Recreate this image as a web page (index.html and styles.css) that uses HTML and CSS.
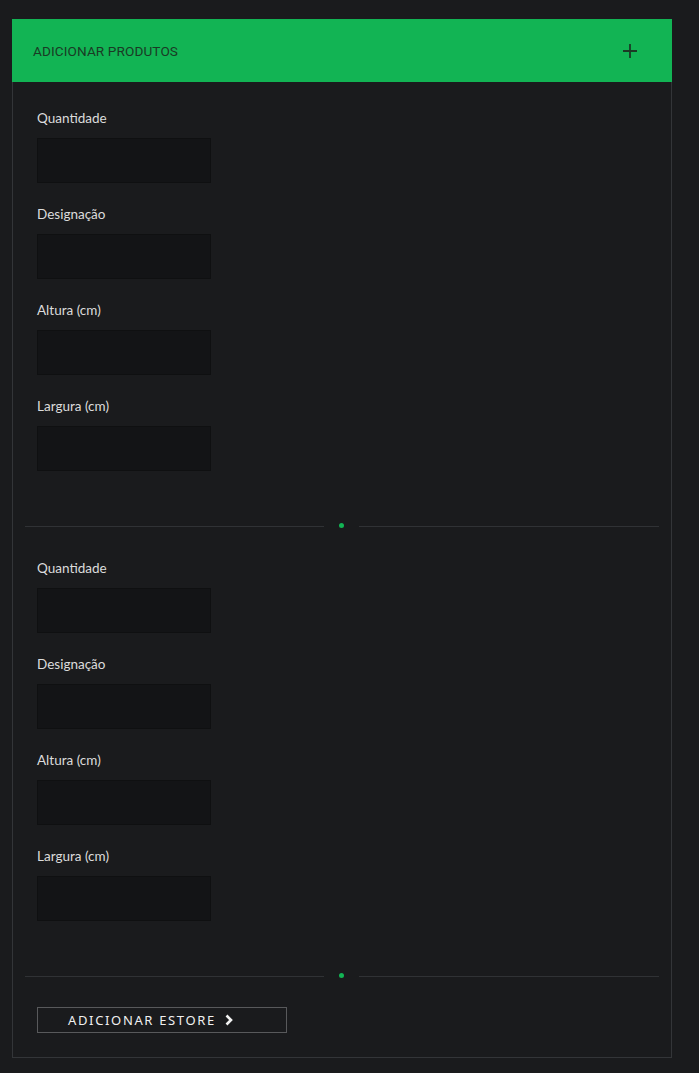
FILE: index.html
```html
<!DOCTYPE html>
<html lang="pt">
<head>
<meta charset="utf-8">
<link rel="stylesheet" href="styles.css">
</head>
<body>
<div class="card">
  <div class="card-header">
    <span class="card-title">ADICIONAR PRODUTOS</span>
    <svg class="plus" width="16" height="16" viewBox="0 0 16 16"><path d="M8 1v14M1 8h14" stroke="#1b3a25" stroke-width="1.8" fill="none"/></svg>
  </div>
  <div class="card-body">
    <div class="group first">
      <div class="field"><label>Quantidade</label><div class="input"></div></div>
      <div class="field"><label>Designação</label><div class="input"></div></div>
      <div class="field"><label>Altura (cm)</label><div class="input"></div></div>
      <div class="field"><label>Largura (cm)</label><div class="input"></div></div>
    </div>
    <div class="divider"><span class="line"></span><span class="dot"></span><span class="line"></span></div>
    <div class="group">
      <div class="field"><label>Quantidade</label><div class="input"></div></div>
      <div class="field"><label>Designação</label><div class="input"></div></div>
      <div class="field"><label>Altura (cm)</label><div class="input"></div></div>
      <div class="field"><label>Largura (cm)</label><div class="input"></div></div>
    </div>
    <div class="divider"><span class="line"></span><span class="dot"></span><span class="line"></span></div>
    <div class="actions">
      <button class="btn"><span>ADICIONAR ESTORE</span>
        <svg width="10" height="12" viewBox="0 0 10 12"><path d="M2.5 1.5l4.5 4.5-4.5 4.5" stroke="#f2f2f2" stroke-width="2.6" fill="none"/></svg>
      </button>
    </div>
  </div>
</div>
</body>
</html>
```
FILE: styles.css
```css
html, body {
  margin: 0;
  background: #1a1b1d;
}
body {
  padding: 19px 0 16px 12px;
  font-family: "Lato", "Noto Sans", sans-serif;
}
.card {
  width: 660px;
  box-sizing: border-box;
  border: 1px solid #333538;
  border-top: none;
  background: #1a1b1d;
}
.card-header {
  height: 63px;
  margin: 0 -1px;
  background: #12b454;
  display: flex;
  align-items: center;
  justify-content: space-between;
  padding: 0 34px 0 21px;
}
.card-title {
  font-family: "Roboto", sans-serif;
  font-size: 13.6px;
  color: #1a3a25;
  letter-spacing: 0.1px;
}
.plus {
  display: block;
  margin-top: 1px;
}
.card-body {
  padding: 0 12px 24px 12px;
}
.group {
  padding: 33px 12px 32px 12px;
}
.group.first {
  padding-top: 28px;
}
.field {
  margin-bottom: 23px;
}
.field label {
  display: block;
  font-size: 13.5px;
  line-height: 16px;
  color: #dcdcdc;
  margin-bottom: 12px;
}
.input {
  width: 174px;
  height: 45px;
  box-sizing: border-box;
  background: #131416;
  border: 1px solid #0f1011;
}
.divider {
  display: flex;
  align-items: center;
  height: 1px;
}
.divider .line {
  flex: 1;
  height: 1px;
  background: #303235;
}
.divider .dot {
  width: 5px;
  height: 5px;
  border-radius: 50%;
  background: #12b454;
  margin: -3px 15px 0 15px;
}
.divider .line:first-child { flex: 0 0 299px; }
.actions {
  padding: 30px 12px 0 12px;
}
.btn {
  width: 250px;
  height: 26px;
  box-sizing: border-box;
  background: transparent;
  border: 1px solid #58595b;
  color: #f0f0f0;
  font-family: "Noto Sans", sans-serif;
  font-size: 13px;
  letter-spacing: 1.65px;
  display: flex;
  align-items: center;
  padding: 0 0 1px 30px;
  gap: 8px;
  cursor: pointer;
}
.btn svg { display: block; }
```
